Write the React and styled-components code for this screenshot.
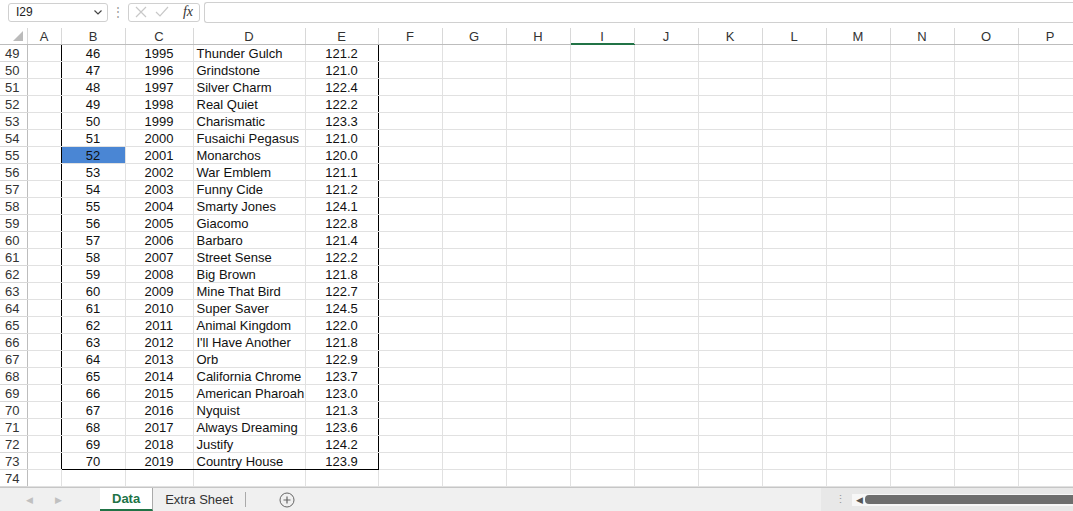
import React from "react";
import styled, { createGlobalStyle } from "styled-components";

const G = createGlobalStyle`
  body{margin:0;font-family:"Liberation Sans",Arial,sans-serif;background:#fff;overflow:hidden;}
`;
const data = [
[46,1995,"Thunder Gulch","121.2"],[47,1996,"Grindstone","121.0"],[48,1997,"Silver Charm","122.4"],
[49,1998,"Real Quiet","122.2"],[50,1999,"Charismatic","123.3"],[51,2000,"Fusaichi Pegasus","121.0"],
[52,2001,"Monarchos","120.0"],[53,2002,"War Emblem","121.1"],[54,2003,"Funny Cide","121.2"],
[55,2004,"Smarty Jones","124.1"],[56,2005,"Giacomo","122.8"],[57,2006,"Barbaro","121.4"],
[58,2007,"Street Sense","122.2"],[59,2008,"Big Brown","121.8"],[60,2009,"Mine That Bird","122.7"],
[61,2010,"Super Saver","124.5"],[62,2011,"Animal Kingdom","122.0"],[63,2012,"I'll Have Another","121.8"],
[64,2013,"Orb","122.9"],[65,2014,"California Chrome","123.7"],[66,2015,"American Pharoah","123.0"],
[67,2016,"Nyquist","121.3"],[68,2017,"Always Dreaming","123.6"],[69,2018,"Justify","124.2"],[70,2019,"Country House","123.9"]];
const cols = ["A","B","C","D","E","F","G","H","I","J","K","L","M","N","O","P"];
const widths = [34,64,68,112,73,64,64,64,64,64,64,64,64,64,64,64];

const Page = styled.div`width:1073px;height:511px;display:flex;flex-direction:column;overflow:hidden;`;
const FBar = styled.div`height:28px;flex-shrink:0;display:flex;align-items:center;gap:4px;padding:0 0 4px 8px;box-sizing:border-box;background:#fff;`;
const NameBox = styled.div`width:100px;height:19px;border:1px solid #d0d0d0;border-radius:3px;display:flex;align-items:center;justify-content:space-between;padding:0 4px 0 7px;box-sizing:border-box;font-size:12px;color:#222;`;
const Dots = styled.span`color:#999;font-size:12px;width:12px;text-align:center;`;
const FxBox = styled.div`width:72px;height:19px;border:1px solid #d0d0d0;border-radius:3px;display:flex;align-items:center;gap:8px;padding:0 6px;box-sizing:border-box;color:#c8c8c8;font-size:14px;`;
const Fx = styled.span`font-family:"Liberation Serif",serif;font-style:italic;color:#333;font-size:14px;margin-left:auto;`;
const Formula = styled.div`flex:1;height:19px;border:1px solid #d0d0d0;border-right:none;border-radius:3px 0 0 3px;`;
const Grid = styled.table`border-collapse:collapse;table-layout:fixed;width:${27+widths.reduce((a,b)=>a+b,0)}px;font-size:13px;`;
const Hd = styled.th`height:16px;padding:0;font-weight:normal;color:#333;background:#fff;border-right:1px solid #d8d8d8;border-bottom:1px solid ${p=>p.$sel?"#217346":"#bdbdbd"};box-shadow:${p=>p.$sel?"inset 0 -1px 0 #217346":"none"};text-align:center;`;
const Rh = styled.th`height:16px;padding:0;font-weight:normal;color:#333;text-align:left;padding-left:5px;border-right:1px solid #bdbdbd;border-bottom:1px solid #d8d8d8;`;
const Td = styled.td`height:16px;padding:0 ${p=>p.$left?"0 0 3px":"0"};text-align:${p=>p.$left?"left":"center"};white-space:nowrap;overflow:hidden;color:#111;border-right:1px solid #e1e1e1;border-bottom:1px solid #e1e1e1;background:${p=>p.$hl?"#4a86d4":"transparent"};`;
const Tabs = styled.div`margin-top:auto;height:24px;background:#f0f0f0;border-top:1px solid #c6c6c6;display:flex;align-items:stretch;font-size:13px;`;
const Arrows = styled.div`width:100px;display:flex;align-items:center;gap:22px;padding-left:26px;box-sizing:border-box;color:#c0c0c0;font-size:9px;`;
const Tab = styled.div`padding:0 12px;display:flex;align-items:center;background:${p=>p.$active?"#fff":"transparent"};color:${p=>p.$active?"#217346":"#333"};font-weight:${p=>p.$active?"bold":"normal"};border-bottom:${p=>p.$active?"2px solid #217346":"none"};border-right:1px solid #aaa;margin:${p=>p.$active?"0":"4px 0"};`;
const Plus = styled.div`margin-left:33px;display:flex;align-items:center;`;
const Scroll = styled.div`margin-left:auto;width:252px;display:flex;align-items:center;background:#e8e8e8;`;
const Track = styled.div`flex:1;height:12px;background:#f7f7f7;margin-left:6px;display:flex;align-items:center;gap:2px;padding-left:4px;`;
const Thumb = styled.div`flex:1;height:9px;background:#6e6e6e;border-radius:4px 0 0 4px;`;

export default function App(){
  return <Page><G/>
    <FBar>
      <NameBox>I29<svg width="10" height="10" viewBox="0 0 10 10"><path d="M1.5 3.5 5 7 8.5 3.5" fill="none" stroke="#444" strokeWidth="1.2"/></svg></NameBox>
      <Dots>⋮</Dots>
      <FxBox>
        <svg width="12" height="12" viewBox="0 0 12 12"><path d="M1 1 11 11M11 1 1 11" stroke="#c8c8c8" strokeWidth="1.2"/></svg>
        <svg width="14" height="12" viewBox="0 0 14 12"><path d="M1 6 5 10 13 1" fill="none" stroke="#c8c8c8" strokeWidth="1.2"/></svg>
        <Fx>fx</Fx>
      </FxBox>
      <Formula/>
    </FBar>
    <Grid>
      <colgroup><col style={{width:27}}/>{widths.map((w,i)=><col key={i} style={{width:w}}/>)}</colgroup>
      <thead><tr><Hd><svg width="10" height="10" viewBox="0 0 10 10" style={{display:"block",marginLeft:13}}><path d="M10 0V10H0Z" fill="#bbb"/></svg></Hd>{cols.map(c=><Hd key={c} $sel={c==="I"}>{c}</Hd>)}</tr></thead>
      <tbody>
        {Array.from({length:26},(_,r)=>{
          const d=data[r]; const last=r===24;
          const bb=(ci)=>{const s={};if(d){if(ci===0||ci===4)s.borderRight="1px solid #000";if(last&&ci>=1&&ci<=4)s.borderBottom="1px solid #000";}return s;};
          return <tr key={r}><Rh>{49+r}</Rh>
            {cols.map((c,ci)=>{
              let v=""; let left=false;
              if(d&&ci>=1&&ci<=4){v=d[ci-1];left=ci===3;}
              return <Td key={c} $left={left} $hl={r===6&&ci===1} style={bb(ci)}>{v}</Td>;
            })}</tr>;
        })}
      </tbody>
    </Grid>
    <Tabs>
      <Arrows><span>◀</span><span>▶</span></Arrows>
      <Tab $active>Data</Tab>
      <Tab>Extra Sheet</Tab>
      <Plus><svg width="16" height="16" viewBox="0 0 16 16"><circle cx="8" cy="8" r="7" fill="none" stroke="#666"/><path d="M8 4.5v7M4.5 8h7" stroke="#666" strokeWidth="1.2"/></svg></Plus>
      <Scroll><span style={{color:"#999",fontSize:11,marginLeft:14}}>⋮</span><Track><span style={{color:"#555",fontSize:9}}>◀</span><Thumb/></Track></Scroll>
    </Tabs>
  </Page>;
}
